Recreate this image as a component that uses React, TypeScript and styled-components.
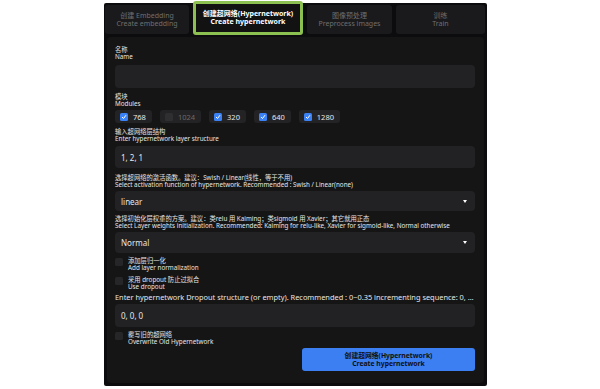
import styled, { createGlobalStyle } from "styled-components";

const Global = createGlobalStyle`
  html, body {
    margin: 0;
    padding: 0;
    background: #ffffff;
  }
  body {
    font-family: "Noto Sans", "Noto Sans CJK SC", sans-serif;
  }
`;

const Page = styled.div`
  width: 600px;
  height: 389px;
  display: flex;
  padding: 3px 0 0 104px;
  box-sizing: border-box;
`;

const Frame = styled.div`
  width: 383px;
  height: 383px;
  background: #0c0c0e;
  border-radius: 2px;
  padding: 2px 3px 3px 3px;
  box-sizing: border-box;
  display: flex;
  flex-direction: column;
`;

const Tabs = styled.div`
  display: flex;
  gap: 4px;
  height: 29px;
  margin-left: -2px;
`;

const Tab = styled.div<{ $active?: boolean; $w: number }>`
  width: ${(p) => p.$w}px;
  flex-shrink: 0;
  height: ${(p) => (p.$active ? 34 : 29)}px;
  margin-top: ${(p) => (p.$active ? -4 : 0)}px;
  display: flex;
  flex-direction: column;
  align-items: center;
  justify-content: center;
  border-radius: 3px;
  box-sizing: border-box;
  background: ${(p) => (p.$active ? "#121212" : "#1a1a1c")};
  border: ${(p) => (p.$active ? "3px solid #8cc152" : "none")};
  color: ${(p) => (p.$active ? "#ffffff" : "#6f6f6f")};
  font-weight: ${(p) => (p.$active ? 700 : 400)};
  font-size: 7px;
  text-align: center;
  white-space: nowrap;
`;

const TabLine = styled.div`
  height: 8px;
  line-height: 8px;
`;

const Panel = styled.div`
  flex: 1;
  margin-top: 3px;
  background: #151515;
  border-radius: 4px;
  padding: 9px 9px 0 8px;
  display: flex;
  flex-direction: column;
`;

const Label = styled.div<{ $gap?: number }>`
  color: #e6e6e6;
  font-size: 6.3px;
  margin-top: ${(p) => p.$gap ?? 0}px;
  white-space: nowrap;
`;

const Line = styled.div<{ $h?: number }>`
  height: ${(p) => p.$h ?? 7}px;
  line-height: ${(p) => p.$h ?? 7}px;
`;

const WideLabel = styled.div`
  color: #e6e6e6;
  font-size: 7.4px;
  height: 10px;
  line-height: 10px;
  margin-top: 2px;
  white-space: nowrap;
  overflow: hidden;
  text-overflow: ellipsis;
`;

const Field = styled.div<{ $h?: number; $gap?: number }>`
  margin-top: ${(p) => p.$gap ?? 4}px;
  height: ${(p) => p.$h ?? 23}px;
  flex-shrink: 0;
  background: #222224;
  border-radius: 4px;
  display: flex;
  align-items: center;
  justify-content: space-between;
  padding: 0 7px 0 6px;
  color: #e8e8e8;
  font-size: 8px;
`;

const Caret = styled.div`
  width: 0;
  height: 0;
  border-left: 2.5px solid transparent;
  border-right: 2.5px solid transparent;
  border-top: 3px solid #ffffff;
  margin-right: 1px;
`;

const Modules = styled.div`
  display: flex;
  gap: 8px;
  margin-top: 3px;
`;

const Chip = styled.div<{ $disabled?: boolean }>`
  height: 13px;
  display: flex;
  align-items: center;
  gap: 5px;
  padding: 0 6px 0 5px;
  background: #232325;
  border-radius: 3px;
  color: ${(p) => (p.$disabled ? "#6a6a6a" : "#e8e8e8")};
  font-size: 7.5px;
`;

const Box = styled.div<{ $on?: boolean; $dim?: boolean }>`
  width: 8px;
  height: 8px;
  margin-top: ${(p) => (p.$on || p.$dim ? 0 : 1)}px;
  border-radius: 1.5px;
  background: ${(p) => (p.$on ? "#3b82f6" : p.$dim ? "#2f2f31" : "#262628")};
  display: flex;
  align-items: center;
  justify-content: center;
  flex-shrink: 0;
`;

const CheckRow = styled.div<{ $gap?: number }>`
  display: flex;
  align-items: flex-start;
  gap: 5px;
  margin-top: ${(p) => p.$gap ?? 0}px;
`;

const CheckText = styled.div`
  color: #e6e6e6;
  font-size: 6.3px;
  white-space: nowrap;
`;

const Footer = styled.div`
  display: flex;
  justify-content: flex-end;
  margin-top: 3px;
`;

const Primary = styled.div`
  width: 173px;
  height: 23px;
  background: #3b7ff3;
  border-radius: 3px;
  display: flex;
  flex-direction: column;
  align-items: center;
  justify-content: center;
  color: #101010;
  font-weight: 700;
  font-size: 6.8px;
  white-space: nowrap;
`;

const Tick = () => (
  <svg width="6" height="6" viewBox="0 0 12 12">
    <path d="M2.5 6.5 L5 9 L9.5 3" stroke="#fff" strokeWidth="2" fill="none" strokeLinecap="round" strokeLinejoin="round" />
  </svg>
);

const modules = [
  { v: "768", on: true },
  { v: "1024", on: false },
  { v: "320", on: true },
  { v: "640", on: true },
  { v: "1280", on: true },
];

const tabs = [
  { zh: "创建 Embedding", en: "Create embedding", w: 84 },
  { zh: "创建超网络(Hypernetwork)", en: "Create hypernetwork", w: 110, active: true },
  { zh: "图像预处理", en: "Preprocess images", w: 85 },
  { zh: "训练", en: "Train", w: 89 },
];

export default function App() {
  return (
    <>
      <Global />
      <Page>
        <Frame>
          <Tabs>
            {tabs.map((t) => (
              <Tab key={t.en} $w={t.w} $active={t.active}>
                <TabLine>{t.zh}</TabLine>
                <TabLine>{t.en}</TabLine>
              </Tab>
            ))}
          </Tabs>
          <Panel>
            <Label>
              <Line>名称</Line>
              <Line>Name</Line>
            </Label>
            <Field $gap={5} />

            <Label $gap={5}>
              <Line>模块</Line>
              <Line>Modules</Line>
            </Label>
            <Modules>
              {modules.map((m) => (
                <Chip key={m.v} $disabled={!m.on}>
                  <Box $on={m.on} $dim={!m.on}>{m.on && <Tick />}</Box>
                  {m.v}
                </Chip>
              ))}
            </Modules>

            <Label $gap={5}>
              <Line>输入超网络层结构</Line>
              <Line>Enter hypernetwork layer structure</Line>
            </Label>
            <Field $gap={4} $h={22}>
              1, 2, 1
            </Field>

            <Label $gap={6}>
              <Line>选择超网络的激活函数。建议：Swish / Linear(线性，等于不用)</Line>
              <Line>Select activation function of hypernetwork. Recommended : Swish / Linear(none)</Line>
            </Label>
            <Field $gap={3} $h={20}>
              linear
              <Caret />
            </Field>

            <Label $gap={4}>
              <Line>选择初始化层权重的方案。建议：类relu 用 Kaiming；类sigmoid 用 Xavier；其它就用正态</Line>
              <Line>
                Select Layer weights initialization. Recommended: Kaiming for relu-like, Xavier for sigmoid-like, Normal otherwise
              </Line>
            </Label>
            <Field $gap={3} $h={21}>
              Normal
              <Caret />
            </Field>

            <CheckRow $gap={4}>
              <Box />
              <CheckText>
                <Line>添加层归一化</Line>
                <Line>Add layer normalization</Line>
              </CheckText>
            </CheckRow>
            <CheckRow $gap={5}>
              <Box />
              <CheckText>
                <Line>采用 dropout 防止过拟合</Line>
                <Line>Use dropout</Line>
              </CheckText>
            </CheckRow>

            <WideLabel>
              Enter hypernetwork Dropout structure (or empty). Recommended : 0~0.35 incrementing sequence: 0, 0.05, 0.15
            </WideLabel>
            <Field $gap={2}>0, 0, 0</Field>

            <CheckRow $gap={4}>
              <Box />
              <CheckText>
                <Line>覆写旧的超网络</Line>
                <Line>Overwrite Old Hypernetwork</Line>
              </CheckText>
            </CheckRow>

            <Footer>
              <Primary>
                <Line $h={7.5}>创建超网络(Hypernetwork)</Line>
                <Line $h={7.5}>Create hypernetwork</Line>
              </Primary>
            </Footer>
          </Panel>
        </Frame>
      </Page>
    </>
  );
}
